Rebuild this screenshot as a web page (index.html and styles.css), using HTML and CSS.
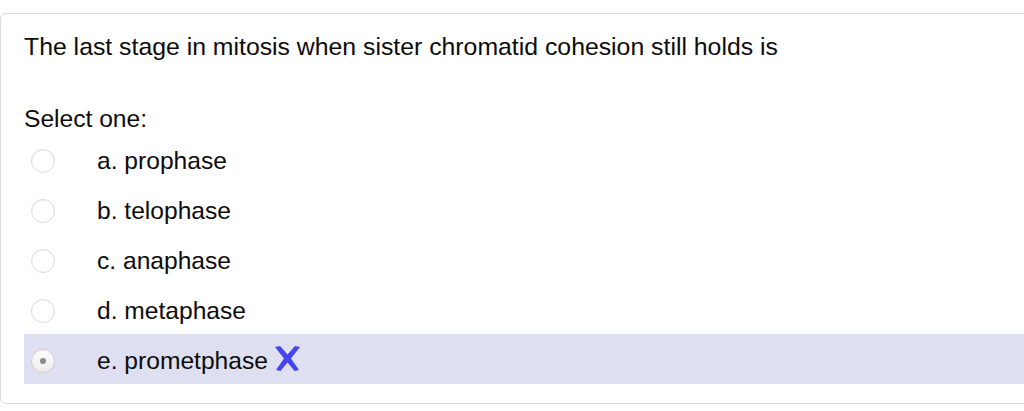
FILE: index.html
```html
<!DOCTYPE html>
<html lang="en">
<head>
  <meta charset="UTF-8">
  <title>Question</title>
  <link rel="stylesheet" href="styles.css">
</head>
<body>
  <div class="que">
    <p class="qtext">The last stage in mitosis when sister chromatid cohesion still holds is</p>
    <p class="prompt">Select one:</p>
    <div class="answer">
      <label class="option">
        <span class="radio"></span>
        <span class="label">a. prophase</span>
      </label>
      <label class="option">
        <span class="radio"></span>
        <span class="label">b. telophase</span>
      </label>
      <label class="option">
        <span class="radio"></span>
        <span class="label">c. anaphase</span>
      </label>
      <label class="option">
        <span class="radio"></span>
        <span class="label">d. metaphase</span>
      </label>
      <label class="option incorrect">
        <span class="radio checked"></span>
        <span class="label">e. prometphase</span>
        <svg class="cross" width="25" height="25" viewBox="0 0 25 25">
          <polygon points="0,1 5,0 12.5,8.5 20,0 25,1 16,12.5 24,24 19.5,25 12.5,16.5 5.5,25 1,24 9,12.5" fill="#4545f0"/>
        </svg>
      </label>
    </div>
  </div>
</body>
</html>
```

FILE: styles.css
```css
body {
  margin: 0;
  padding: 0;
  background: #fff;
  font-family: "Liberation Sans", Arial, sans-serif;
  color: #0c0c0c;
  overflow: hidden;
}

.que {
  margin-top: 13px;
  width: 1040px;
  border: 1px solid #dcdcdc;
  border-radius: 6px;
  padding: 18px 0 19px 23px;
}

.qtext {
  margin: 0;
  font-size: 24.8px;
  line-height: 30px;
}

.prompt {
  margin: 42px 0 0;
  font-size: 24.6px;
  line-height: 30px;
}

.option {
  display: flex;
  align-items: center;
  height: 50px;
  font-size: 24.6px;
  line-height: 30px;
}

.option.incorrect {
  background-color: #dedff0;
}

.radio {
  width: 22px;
  height: 22px;
  margin: 4px 0 0 7px;
  border: 1px solid #dadada;
  border-radius: 50%;
  background: #fff;
  box-shadow: inset 0 1px 1px rgba(0, 0, 0, 0.04);
  display: flex;
  align-items: center;
  justify-content: center;
}

.radio.checked {
  background: linear-gradient(#fdfdfd, #ececec);
  border-color: #cfcfcf;
}

.radio.checked::after {
  content: "";
  width: 6px;
  height: 6px;
  border-radius: 50%;
  background: #8a8a8a;
}

.label {
  margin: 3px 0 0 42px;
}

.cross {
  margin-left: 7px;
  margin-top: -2px;
}
```
